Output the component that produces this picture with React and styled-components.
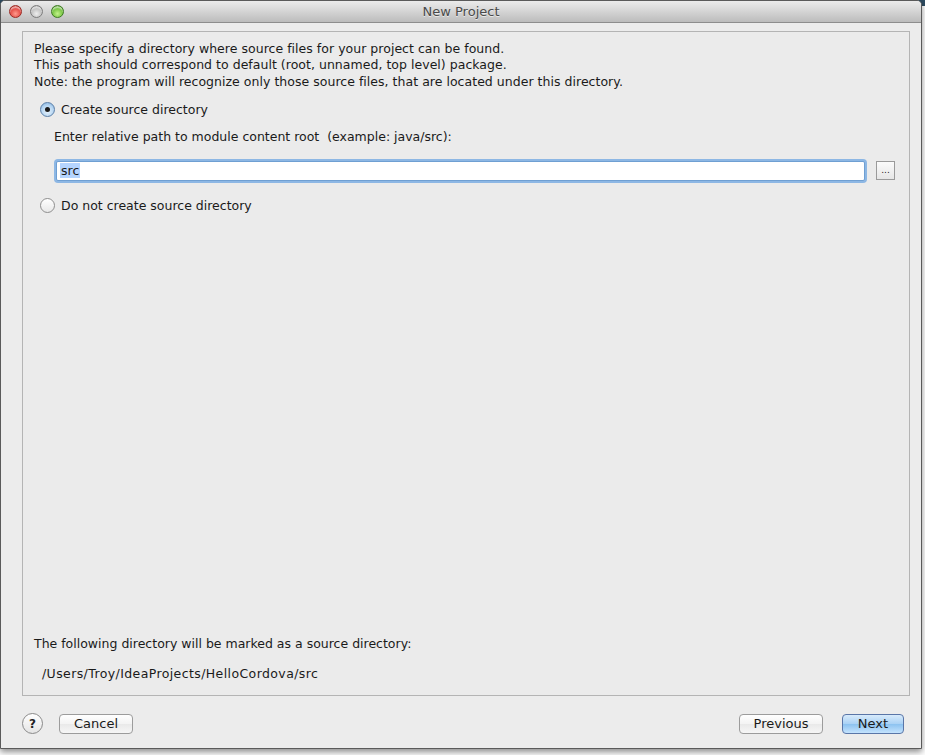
import React from "react";
import styled, { createGlobalStyle } from "styled-components";

const GlobalStyle = createGlobalStyle`
  html, body {
    margin: 0;
    padding: 0;
    background: #ffffff;
  }
  body {
    font-family: "DejaVu Sans", "Liberation Sans", sans-serif;
    font-size: 12.5px;
    color: #1a1a1a;
  }
`;

const Desktop = styled.div`
  width: 925px;
  height: 755px;
  overflow: hidden;
  background: linear-gradient(to bottom, #2d4b60 0, #2d4b60 6px, #ffffff 6px);
`;

const Window = styled.div`
  width: 920px;
  height: 747px;
  background: #ececec;
  border: 1px solid #5a5a5a;
  border-radius: 5px 5px 0 0;
  box-shadow: 0 3px 6px rgba(0, 0, 0, 0.45);
  display: flex;
  flex-direction: column;
  overflow: hidden;
`;

const TitleBar = styled.div`
  height: 21px;
  flex: none;
  background: linear-gradient(to bottom, #ebebeb, #d4d4d4 50%, #bcbcbc);
  border-bottom: 1px solid #8d8d8d;
  display: flex;
  align-items: center;
  position: relative;
`;

const Lights = styled.div`
  display: flex;
  gap: 8px;
  padding-left: 8px;
`;

const Light = styled.span`
  width: 13px;
  height: 13px;
  border-radius: 50%;
  box-sizing: border-box;
  border: 1px solid ${(p) => p.$edge};
  background: radial-gradient(circle at 50% 70%, ${(p) => p.$glow} 0, ${(p) => p.$color} 60%, ${(p) => p.$dark} 100%);
  box-shadow: inset 0 2px 1px rgba(255, 255, 255, 0.55);
`;

const Title = styled.div`
  position: absolute;
  left: 0;
  right: 0;
  text-align: center;
  font-size: 13px;
  color: #4a4a4a;
  text-shadow: 0 1px 0 rgba(255, 255, 255, 0.6);
`;

const Body = styled.div`
  flex: 1;
  display: flex;
  flex-direction: column;
  padding: 8px 11px 0 21px;
`;

const Panel = styled.div`
  flex: 1;
  border: 1px solid #b4b4b4;
  background: #ebebeb;
  padding: 9px 14px 13px 11px;
  display: flex;
  flex-direction: column;
`;

const Intro = styled.p`
  margin: 0;
  line-height: 16.3px;
  letter-spacing: 0.03px;
`;

const RadioRow = styled.label`
  display: flex;
  align-items: center;
  gap: 6px;
  margin: ${(p) => p.$margin};
  padding-left: 6px;
`;

const RadioDot = styled.span`
  width: 15px;
  height: 15px;
  border-radius: 50%;
  box-sizing: border-box;
  border: 1px solid ${(p) => (p.$checked ? "#5b7fa8" : "#8e8e8e")};
  background: ${(p) =>
    p.$checked
      ? "radial-gradient(circle at 50% 65%, #e6f2fc 0, #b7d6f2 55%, #7eaedb 100%)"
      : "linear-gradient(to bottom, #ffffff, #e8e8e8)"};
  display: flex;
  align-items: center;
  justify-content: center;
  &::after {
    content: "";
    width: 5px;
    height: 5px;
    border-radius: 50%;
    background: #1b1b1b;
    display: ${(p) => (p.$checked ? "block" : "none")};
  }
`;

const Hint = styled.div`
  margin: 12px 0 0 20px;
`;

const PathRow = styled.div`
  display: flex;
  align-items: center;
  gap: 11px;
  margin: 17px 0 0 22px;
`;

const PathInput = styled.div`
  flex: 1;
  height: 18px;
  background: #ffffff;
  border: 1px solid #6f9fd2;
  box-shadow: 0 0 0 2px #8db7e4;
  border-radius: 2px;
  display: flex;
  align-items: center;
  padding-left: 3px;
`;

const Selected = styled.span`
  background: #b5d5ff;
  padding: 0 1px;
  line-height: 15px;
`;

const BrowseButton = styled.div`
  width: 19px;
  height: 19px;
  box-sizing: border-box;
  border: 1px solid #9a9a9a;
  background: linear-gradient(to bottom, #fbfbfb, #e6e6e6);
  font-size: 9px;
  display: flex;
  align-items: center;
  justify-content: center;
  line-height: 1;
`;

const Spacer = styled.div`
  flex: 1;
`;

const Note = styled.div`
  line-height: 16px;
`;

const PathText = styled.div`
  margin: 14px 0 0 8px;
  line-height: 16px;
  letter-spacing: 0.4px;
`;

const Footer = styled.div`
  height: 52px;
  flex: none;
  display: flex;
  align-items: center;
  padding: 3px 17px 0 21px;
  box-sizing: border-box;
  gap: 16px;
`;

const Help = styled.div`
  width: 21px;
  height: 21px;
  box-sizing: border-box;
  border-radius: 50%;
  border: 1px solid #8a8a8a;
  background: linear-gradient(to bottom, #ffffff, #e4e4e4);
  font-weight: bold;
  font-size: 12px;
  display: flex;
  align-items: center;
  justify-content: center;
  color: #222;
`;

const Button = styled.div`
  height: 20px;
  box-sizing: border-box;
  min-width: ${(p) => p.$width}px;
  border-radius: 4px;
  border: 1px solid ${(p) => (p.$primary ? "#5a76a8" : "#9c9c9c")};
  background: ${(p) =>
    p.$primary
      ? "linear-gradient(to bottom, #d8ebfb 0, #a9d1f5 50%, #8cc2f0 51%, #c4e3fd 100%)"
      : "linear-gradient(to bottom, #ffffff 0, #f3f3f3 50%, #e9e9e9 51%, #f6f6f6 100%)"};
  display: flex;
  align-items: center;
  justify-content: center;
  font-size: 13px;
  color: #1a1a1a;
`;

const RightButtons = styled.div`
  margin-left: auto;
  display: flex;
  gap: 19px;
`;

export default function App() {
  return (
    <>
      <GlobalStyle />
      <Desktop>
        <Window>
          <TitleBar>
            <Lights>
              <Light $color="#e0443e" $glow="#ff9a8c" $dark="#a5201a" $edge="#9b2a24" />
              <Light $color="#bdbdbd" $glow="#eeeeee" $dark="#8a8a8a" $edge="#7c7c7c" />
              <Light $color="#6fbf3a" $glow="#c4f28c" $dark="#3f8a19" $edge="#3d7a22" />
            </Lights>
            <Title>New Project</Title>
          </TitleBar>
          <Body>
            <Panel>
              <Intro>
                Please specify a directory where source files for your project can be found.
                <br />
                This path should correspond to default (root, unnamed, top level) package.
                <br />
                Note: the program will recognize only those source files, that are located under this directory.
              </Intro>
              <RadioRow $margin="12px 0 0 0">
                <RadioDot $checked />
                Create source directory
              </RadioRow>
              <Hint>Enter relative path to module content root&nbsp; (example: java/src):</Hint>
              <PathRow>
                <PathInput>
                  <Selected>src</Selected>
                </PathInput>
                <BrowseButton>...</BrowseButton>
              </PathRow>
              <RadioRow $margin="17px 0 0 0">
                <RadioDot />
                Do not create source directory
              </RadioRow>
              <Spacer />
              <Note>The following directory will be marked as a source directory:</Note>
              <PathText>/Users/Troy/IdeaProjects/HelloCordova/src</PathText>
            </Panel>
          </Body>
          <Footer>
            <Help>?</Help>
            <Button $width={74}>Cancel</Button>
            <RightButtons>
              <Button $width={84}>Previous</Button>
              <Button $width={62} $primary>Next</Button>
            </RightButtons>
          </Footer>
        </Window>
      </Desktop>
    </>
  );
}
